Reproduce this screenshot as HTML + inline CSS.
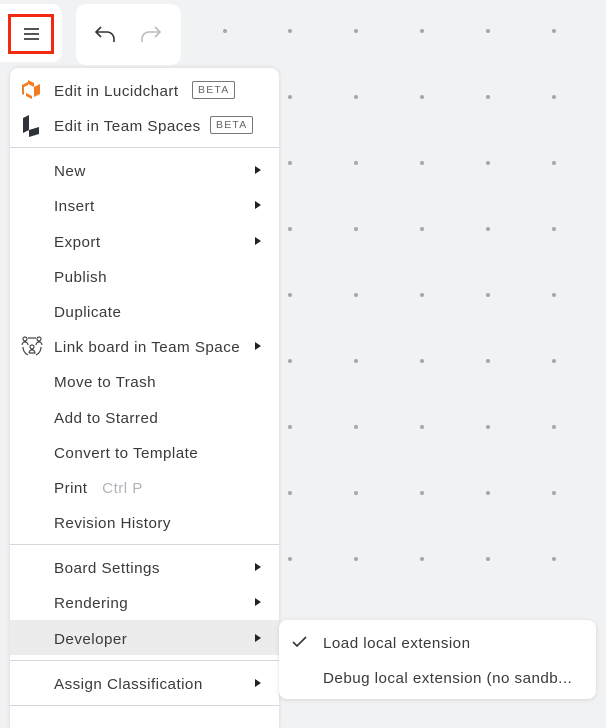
<!DOCTYPE html>
<html><head><style>
*{margin:0;padding:0;box-sizing:border-box}
body{width:606px;height:722px;background:#f1f2f4;position:relative;overflow:hidden;font-family:"Liberation Sans",sans-serif;color:#3a3a3a}
.dot{position:absolute;width:4px;height:4px;border-radius:2px;background:#a6a8ad}
.box{position:absolute;background:#fff;border-radius:10px}
.menu{position:absolute;left:10px;top:68px;width:269px;height:660px;background:#fff;border-radius:8px 8px 0 0;box-shadow:0 0 4px rgba(0,0,0,.12)}
.it{position:absolute;left:54px;font-size:15.2px;letter-spacing:0.45px;line-height:18px;margin-top:2px;white-space:nowrap}
.ar{position:absolute;left:255px;width:0;height:0;border-left:6px solid #222;border-top:4px solid transparent;border-bottom:4px solid transparent}
.sep{position:absolute;left:10px;width:269px;height:1px;background:#d3d6dc}
.beta{position:absolute;font-size:10.5px;letter-spacing:1.2px;color:#666;border:1px solid #777;border-radius:2px;padding:2px 5px;line-height:12px}
</style></head><body>
<div id="dots"></div>
<script>
var d=document.getElementById('dots'),xs=[225,290,356,422,488,554],ys=[31,97,163,229,295,361,427,493,559],h='';
xs.forEach(function(x){ys.forEach(function(y){h+='<div class="dot" style="left:'+(x-2)+'px;top:'+(y-2)+'px"></div>'})});d.innerHTML=h;
</script>
<div class="box" style="left:-10px;top:4px;width:72px;height:58px"></div>
<div style="position:absolute;left:8px;top:14px;width:46px;height:40px;border:3px solid #f22a12"></div>
<div style="position:absolute;left:24px;top:28px;width:15px;height:1.5px;background:#555;box-shadow:0 5px 0 #555,0 10px 0 #555"></div>
<div class="box" style="left:76px;top:4px;width:105px;height:61px"></div>
<svg style="position:absolute;left:94px;top:24px" width="24" height="22" viewBox="0 0 24 22"><path d="M7 3L2 8l5 5M2 8h11a7 7 0 0 1 7 7v3" fill="none" stroke="#333" stroke-width="1.6"/></svg>
<svg style="position:absolute;left:138px;top:24px" width="24" height="22" viewBox="0 0 24 22"><path d="M17 3l5 5-5 5M22 8H11a7 7 0 0 0-7 7v3" fill="none" stroke="#b8bbc0" stroke-width="1.6"/></svg>
<div class="menu"></div>
<svg style="position:absolute;left:20px;top:79px" width="22" height="22" viewBox="0 0 22 22"><path d="M8 1l6 3v4l-6-3zM14 8l6-3v10l-6 3zM2 6l6-3v3L4 8v8l-2-1zM6 17l6 3 0 -3-6-3z" fill="#f47b20"/></svg>
<svg style="position:absolute;left:23px;top:115px" width="18" height="22" viewBox="0 0 18 22"><path d="M0 3l6-3v15l-6 3zM6 15l10-3v7L6 22z" fill="#2f3238"/></svg>
<div class="it" style="top:81px">Edit in Lucidchart</div><div class="beta" style="left:192px;top:81px">BETA</div>
<div class="it" style="top:116px">Edit in Team Spaces</div><div class="beta" style="left:210px;top:116px">BETA</div>
<div class="sep" style="top:147px"></div>
<div class="it" style="top:161px">New</div><div class="ar" style="top:166px"></div>
<div class="it" style="top:196px">Insert</div><div class="ar" style="top:201px"></div>
<div class="it" style="top:232px">Export</div><div class="ar" style="top:237px"></div>
<div class="it" style="top:267px">Publish</div>
<div class="it" style="top:302px">Duplicate</div>
<svg style="position:absolute;left:20px;top:335px" width="24" height="22" viewBox="0 0 24 22" fill="none" stroke="#444" stroke-width="1.2"><circle cx="5" cy="4" r="2"/><circle cx="19" cy="4" r="2"/><circle cx="12" cy="12" r="2"/><path d="M2 10a3 3 0 0 1 6 0M16 10a3 3 0 0 1 6 0M9 18a3 3 0 0 1 6 0h-6M8 3h8M3 12a9 9 0 0 0 5 8M21 12a9 9 0 0 1-5 8"/></svg>
<div class="it" style="top:337px">Link board in Team Space</div><div class="ar" style="top:342px"></div>
<div class="it" style="top:372px">Move to Trash</div>
<div class="it" style="top:408px">Add to Starred</div>
<div class="it" style="top:443px">Convert to Template</div>
<div class="it" style="top:478px">Print <span style="color:#b0b4bb;margin-left:10px">Ctrl P</span></div>
<div class="it" style="top:513px">Revision History</div>
<div class="sep" style="top:544px"></div>
<div class="it" style="top:558px">Board Settings</div><div class="ar" style="top:563px"></div>
<div class="it" style="top:593px">Rendering</div><div class="ar" style="top:598px"></div>
<div style="position:absolute;left:10px;top:620px;width:269px;height:35px;background:#ececec"></div>
<div class="it" style="top:629px">Developer</div><div class="ar" style="top:634px"></div>
<div class="sep" style="top:660px"></div>
<div class="it" style="top:674px">Assign Classification</div><div class="ar" style="top:679px"></div>
<div class="sep" style="top:705px"></div>
<div style="position:absolute;left:279px;top:620px;width:317px;height:79px;background:#fff;border-radius:8px;box-shadow:0 1px 4px rgba(0,0,0,.12)"></div>
<svg style="position:absolute;left:292px;top:636px" width="16" height="12" viewBox="0 0 16 12"><path d="M1 6l4 4 9-9" fill="none" stroke="#333" stroke-width="1.6"/></svg>
<div class="it" style="left:323px;top:633px">Load local extension</div>
<div class="it" style="left:323px;top:668px">Debug local extension (no sandb...</div>
</body></html>
